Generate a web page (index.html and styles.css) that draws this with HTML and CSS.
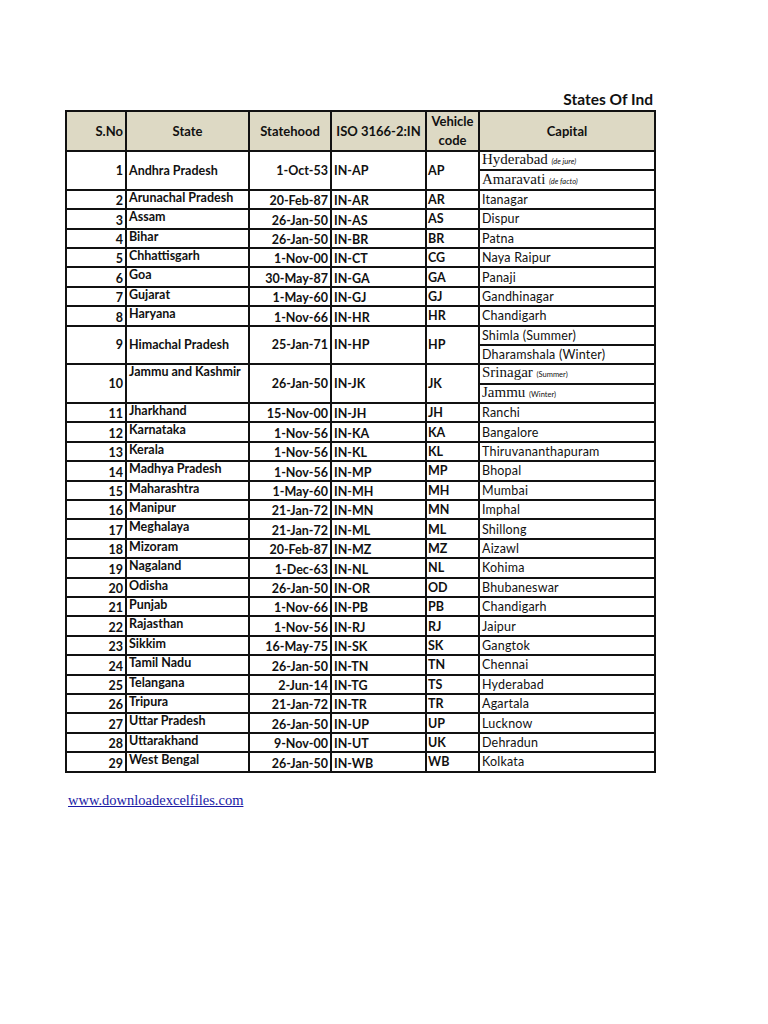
FILE: index.html
```html
<!DOCTYPE html>
<html>
<head>
<meta charset="utf-8">
<link rel="stylesheet" href="styles.css">
</head>
<body>
<div class="sheet">
  <div class="title">States Of Ind</div>
  <table class="grid">
    <colgroup>
      <col class="c-sn"><col class="c-st"><col class="c-dt"><col class="c-iso"><col class="c-vc"><col class="c-cap">
    </colgroup>
    <thead>
      <tr class="hrow">
        <th class="h-sn">S.No</th>
        <th>State</th>
        <th>Statehood</th>
        <th>ISO 3166-2:IN</th>
        <th class="h-vc">Vehicle<br>code</th>
        <th>Capital</th>
      </tr>
    </thead>
    <tbody>
      <tr>
        <td class="sn mid" rowspan="2">1</td>
        <td class="st mid" rowspan="2">Andhra Pradesh</td>
        <td class="dt mid" rowspan="2">1-Oct-53</td>
        <td class="iso mid" rowspan="2">IN-AP</td>
        <td class="vc mid" rowspan="2">AP</td>
        <td class="cap serif">Hyderabad <i class="note">(de jure)</i></td>
      </tr>
      <tr><td class="cap serif">Amaravati <i class="note">(de facto)</i></td></tr>
      <tr><td class="sn">2</td><td class="st">Arunachal Pradesh</td><td class="dt">20-Feb-87</td><td class="iso">IN-AR</td><td class="vc">AR</td><td class="cap">Itanagar</td></tr>
      <tr><td class="sn">3</td><td class="st">Assam</td><td class="dt">26-Jan-50</td><td class="iso">IN-AS</td><td class="vc">AS</td><td class="cap">Dispur</td></tr>
      <tr><td class="sn">4</td><td class="st">Bihar</td><td class="dt">26-Jan-50</td><td class="iso">IN-BR</td><td class="vc">BR</td><td class="cap">Patna</td></tr>
      <tr><td class="sn">5</td><td class="st">Chhattisgarh</td><td class="dt">1-Nov-00</td><td class="iso">IN-CT</td><td class="vc">CG</td><td class="cap">Naya Raipur</td></tr>
      <tr><td class="sn">6</td><td class="st">Goa</td><td class="dt">30-May-87</td><td class="iso">IN-GA</td><td class="vc">GA</td><td class="cap">Panaji</td></tr>
      <tr><td class="sn">7</td><td class="st">Gujarat</td><td class="dt">1-May-60</td><td class="iso">IN-GJ</td><td class="vc">GJ</td><td class="cap">Gandhinagar</td></tr>
      <tr><td class="sn">8</td><td class="st">Haryana</td><td class="dt">1-Nov-66</td><td class="iso">IN-HR</td><td class="vc">HR</td><td class="cap">Chandigarh</td></tr>
      <tr>
        <td class="sn mid" rowspan="2">9</td>
        <td class="st mid" rowspan="2">Himachal Pradesh</td>
        <td class="dt mid" rowspan="2">25-Jan-71</td>
        <td class="iso mid" rowspan="2">IN-HP</td>
        <td class="vc mid" rowspan="2">HP</td>
        <td class="cap">Shimla (Summer)</td>
      </tr>
      <tr><td class="cap">Dharamshala (Winter)</td></tr>
      <tr>
        <td class="sn mid" rowspan="2">10</td>
        <td class="st" rowspan="2">Jammu and Kashmir</td>
        <td class="dt mid" rowspan="2">26-Jan-50</td>
        <td class="iso mid" rowspan="2">IN-JK</td>
        <td class="vc mid" rowspan="2">JK</td>
        <td class="cap serif">Srinagar <span class="note">(Summer)</span></td>
      </tr>
      <tr><td class="cap serif">Jammu <span class="note">(Winter)</span></td></tr>
      <tr><td class="sn">11</td><td class="st">Jharkhand</td><td class="dt">15-Nov-00</td><td class="iso">IN-JH</td><td class="vc">JH</td><td class="cap">Ranchi</td></tr>
      <tr><td class="sn">12</td><td class="st">Karnataka</td><td class="dt">1-Nov-56</td><td class="iso">IN-KA</td><td class="vc">KA</td><td class="cap">Bangalore</td></tr>
      <tr><td class="sn">13</td><td class="st">Kerala</td><td class="dt">1-Nov-56</td><td class="iso">IN-KL</td><td class="vc">KL</td><td class="cap">Thiruvananthapuram</td></tr>
      <tr><td class="sn">14</td><td class="st">Madhya Pradesh</td><td class="dt">1-Nov-56</td><td class="iso">IN-MP</td><td class="vc">MP</td><td class="cap">Bhopal</td></tr>
      <tr><td class="sn">15</td><td class="st">Maharashtra</td><td class="dt">1-May-60</td><td class="iso">IN-MH</td><td class="vc">MH</td><td class="cap">Mumbai</td></tr>
      <tr><td class="sn">16</td><td class="st">Manipur</td><td class="dt">21-Jan-72</td><td class="iso">IN-MN</td><td class="vc">MN</td><td class="cap">Imphal</td></tr>
      <tr><td class="sn">17</td><td class="st">Meghalaya</td><td class="dt">21-Jan-72</td><td class="iso">IN-ML</td><td class="vc">ML</td><td class="cap">Shillong</td></tr>
      <tr><td class="sn">18</td><td class="st">Mizoram</td><td class="dt">20-Feb-87</td><td class="iso">IN-MZ</td><td class="vc">MZ</td><td class="cap">Aizawl</td></tr>
      <tr><td class="sn">19</td><td class="st">Nagaland</td><td class="dt">1-Dec-63</td><td class="iso">IN-NL</td><td class="vc">NL</td><td class="cap">Kohima</td></tr>
      <tr><td class="sn">20</td><td class="st">Odisha</td><td class="dt">26-Jan-50</td><td class="iso">IN-OR</td><td class="vc">OD</td><td class="cap">Bhubaneswar</td></tr>
      <tr><td class="sn">21</td><td class="st">Punjab</td><td class="dt">1-Nov-66</td><td class="iso">IN-PB</td><td class="vc">PB</td><td class="cap">Chandigarh</td></tr>
      <tr><td class="sn">22</td><td class="st">Rajasthan</td><td class="dt">1-Nov-56</td><td class="iso">IN-RJ</td><td class="vc">RJ</td><td class="cap">Jaipur</td></tr>
      <tr><td class="sn">23</td><td class="st">Sikkim</td><td class="dt">16-May-75</td><td class="iso">IN-SK</td><td class="vc">SK</td><td class="cap">Gangtok</td></tr>
      <tr><td class="sn">24</td><td class="st">Tamil Nadu</td><td class="dt">26-Jan-50</td><td class="iso">IN-TN</td><td class="vc">TN</td><td class="cap">Chennai</td></tr>
      <tr><td class="sn">25</td><td class="st">Telangana</td><td class="dt">2-Jun-14</td><td class="iso">IN-TG</td><td class="vc">TS</td><td class="cap">Hyderabad</td></tr>
      <tr><td class="sn">26</td><td class="st">Tripura</td><td class="dt">21-Jan-72</td><td class="iso">IN-TR</td><td class="vc">TR</td><td class="cap">Agartala</td></tr>
      <tr><td class="sn">27</td><td class="st">Uttar Pradesh</td><td class="dt">26-Jan-50</td><td class="iso">IN-UP</td><td class="vc">UP</td><td class="cap">Lucknow</td></tr>
      <tr><td class="sn">28</td><td class="st">Uttarakhand</td><td class="dt">9-Nov-00</td><td class="iso">IN-UT</td><td class="vc">UK</td><td class="cap">Dehradun</td></tr>
      <tr><td class="sn">29</td><td class="st">West Bengal</td><td class="dt">26-Jan-50</td><td class="iso">IN-WB</td><td class="vc">WB</td><td class="cap">Kolkata</td></tr>
    </tbody>
  </table>
  <a class="site" href="#">www.downloadexcelfiles.com</a>
</div>
</body>
</html>
```
FILE: styles.css
```css
html, body {
  margin: 0;
  padding: 0;
  background: #ffffff;
}
.sheet {
  width: 589px;
  margin-left: 65px;
  padding-top: 90px;
  font-family: Lato, "Open Sans", sans-serif;
  color: #111111;
}
.title {
  text-align: right;
  font-weight: 700;
  font-size: 15.5px;
  line-height: 19px;
  height: 19px;
  padding-right: 1px;
}
.grid {
  border-collapse: collapse;
  table-layout: fixed;
  width: 589px;
  margin-top: 1px;
}
.c-sn { width: 60px; }
.c-st { width: 123px; }
.c-dt { width: 82px; }
.c-iso { width: 95px; }
.c-vc { width: 53px; }
.c-cap { width: 176px; }
.grid th, .grid td {
  border: 2px solid #111111;
  padding: 0 2px;
  font-size: 12.5px;
  line-height: 13px;
  white-space: nowrap;
  overflow: hidden;
}
.hrow th {
  background: #ddd9c4;
  height: 35px;
  font-size: 13px;
  line-height: 19px;
  font-weight: 700;
  text-align: center;
  vertical-align: middle;
}
.hrow .h-sn { text-align: right; }
.grid tbody tr { height: 19.4px; }
.grid td {
  font-weight: 700;
  vertical-align: bottom;
  padding-top: 0;
  padding-bottom: 1px;
}
.sn { text-align: right; padding-right: 0; }
.grid td.st { vertical-align: top; text-align: left; padding-top: 0; padding-bottom: 0; }
.dt { text-align: right; padding-right: 0; }
.iso { text-align: left; padding-left: 1px; }
.grid td.vc { text-align: left; padding-left: 1px; vertical-align: middle; padding-bottom: 0; }
.grid td.cap { text-align: left; font-weight: 400; font-size: 12.5px; letter-spacing: 0.2px; vertical-align: middle; padding-bottom: 0; }
.grid td.mid { vertical-align: middle; padding-bottom: 0; }
.grid td.serif {
  font-family: "Liberation Serif", serif;
  font-size: 15px;
  letter-spacing: 0;
  line-height: 13px;
}
.note {
  font-family: Lato, sans-serif;
  font-size: 7.5px;
  letter-spacing: 0;
}
.site {
  display: inline-block;
  margin-top: 19px;
  margin-left: 3px;
  font-family: "Liberation Serif", serif;
  font-size: 14.5px;
  color: #1a1aa6;
  text-decoration: underline;
}
```
